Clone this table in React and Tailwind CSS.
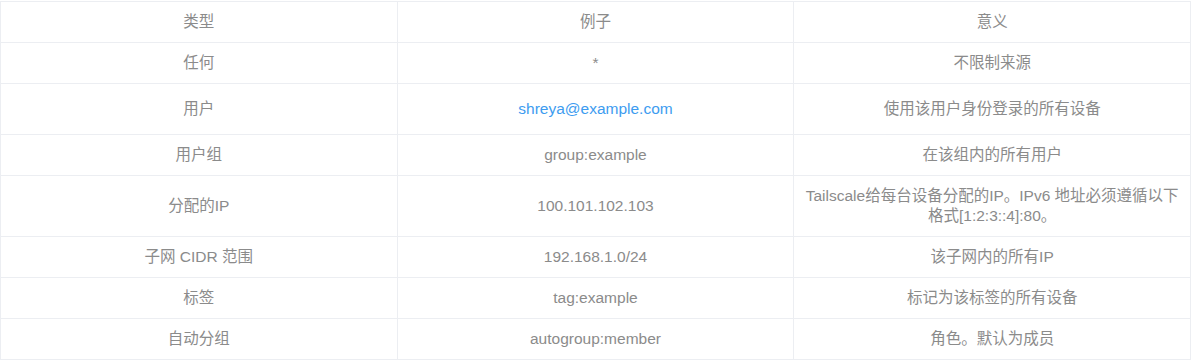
const rows = [
    { type: '任何', example: '*', meaning: '不限制来源' },
    { type: '用户', example: 'shreya@example.com', meaning: '使用该用户身份登录的所有设备', link: true },
    { type: '用户组', example: 'group:example', meaning: '在该组内的所有用户' },
    { type: '分配的IP', example: '100.101.102.103', meaning: 'Tailscale给每台设备分配的IP。IPv6 地址必须遵循以下格式[1:2:3::4]:80。' },
    { type: '子网 CIDR 范围', example: '192.168.1.0/24', meaning: '该子网内的所有IP' },
    { type: '标签', example: 'tag:example', meaning: '标记为该标签的所有设备' },
    { type: '自动分组', example: 'autogroup:member', meaning: '角色。默认为成员' },
];

const App = () => {
    const cell = 'border border-[#eceef2] px-[10px] py-[10px] text-center align-middle';

    return (
        <div className="min-h-[360px] bg-white pt-px font-['Liberation_Sans','Noto_Sans_CJK_SC',sans-serif] text-[15.5px] leading-[20px] text-[#8b8b8b]">
            <table className="w-[1191px] table-fixed border-collapse">
                <thead>
                    <tr>
                        <th className={`${cell} font-normal`}>类型</th>
                        <th className={`${cell} font-normal`}>例子</th>
                        <th className={`${cell} font-normal`}>意义</th>
                    </tr>
                </thead>
                <tbody>
                    {rows.map((r) => (
                        <tr key={r.type}>
                            <td className={cell}>{r.type}</td>
                            <td className={r.link ? `${cell} py-[15px]` : cell}>
                                {r.link ? (
                                    <a href="#" className="text-[#3d9cf0]">{r.example}</a>
                                ) : (
                                    r.example
                                )}
                            </td>
                            <td className={cell}>{r.meaning}</td>
                        </tr>
                    ))}
                </tbody>
            </table>
        </div>
    );
};

export default App;
